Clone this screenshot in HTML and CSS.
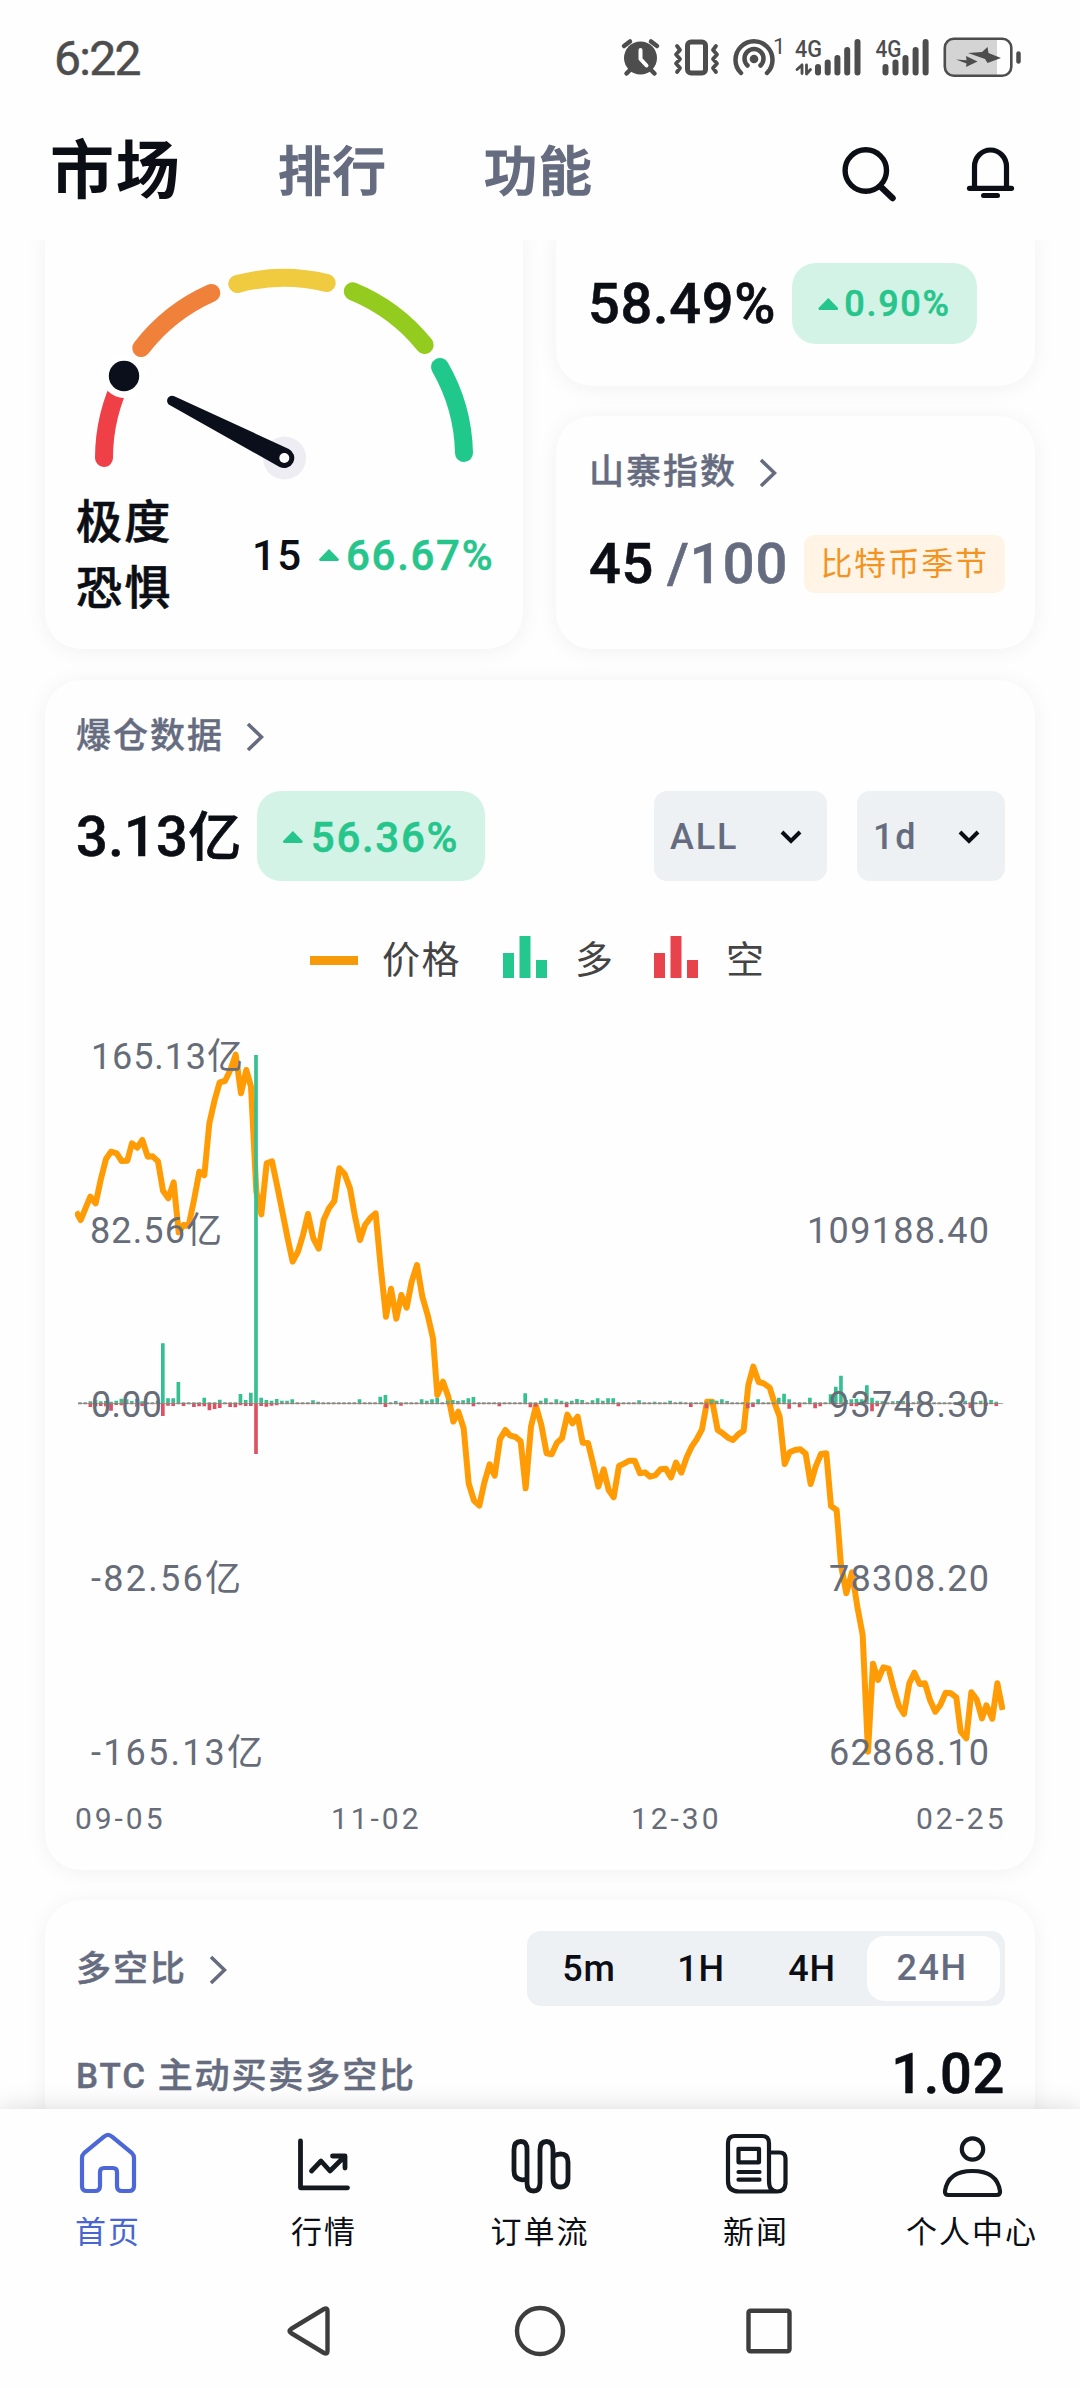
FILE: index.html
```html
<!DOCTYPE html>
<html lang="zh-CN">
<head>
<meta charset="utf-8">
<title>市场</title>
<link rel="stylesheet" href="styles.css">
</head>
<body>
<div class="screen">
  <div class="statusbar">
    <span class="clock">6:22</span>
    <svg class="status-icons" width="410" height="48" viewBox="616 34 410 48" fill="none" stroke="#4d4d4d" stroke-linecap="round" stroke-linejoin="round">
      <circle cx="640.500" cy="58" r="16.500" fill="#4d4d4d" stroke="none"/>
      <path d="M640.500 50v9l6 6.500" stroke="#fff" stroke-width="4"/>
      <path d="M624 46l6-4.500M657 46l-6-4.500M630 70l-3.500 3.500M651 70l3.500 3.500" stroke-width="4.500"/>
      <rect x="687.500" y="42" width="18" height="31" rx="3.500" stroke-width="5"/>
      <path d="M677 46l3 4-4 4.500 4 4.500-4 4.500 4 4.500-3 4M716 46l-3 4 4 4.500-4 4.500 4 4.500-4 4.500 3 4" stroke-width="3.800"/>
      <circle cx="754" cy="59" r="4.300" fill="#4d4d4d" stroke="none"/>
      <path d="M747.500 65.500a9.500 9.500 0 1 1 13 0M741 73a18.500 18.500 0 1 1 26 0" stroke-width="4.500"/>
      <g fill="#4d4d4d" stroke="none" class="status-text">
        <text x="773" y="54" font-size="22">1</text>
        <text x="795" y="56.500" font-size="24" font-weight="500" textLength="27" lengthAdjust="spacingAndGlyphs">4G</text>
        <text x="875.500" y="56.500" font-size="24" font-weight="500" textLength="26" lengthAdjust="spacingAndGlyphs">4G</text>
      </g>
      <path d="M802 65v8.500M802 65l-5 4.500M806.500 65v8.500M806.500 74l4-4.500" stroke-width="2.800"/>
      <path d="M818 67v5.500M827.700 62.500v10M837.400 58v14.500M847.200 50v22.500M857.500 42v30.500M885.500 67v5.500M895.500 62.500v10M905.500 58v14.500M915.600 50v22.500M925.600 42v30.500" stroke-width="6"/>
      <path d="M952 39h45v37h-45q-7 0-7-7V46q0-7 7-7z" fill="#d4d4d4" stroke="none"/>
      <rect x="944.800" y="38.800" width="66.500" height="37" rx="9" stroke-width="2.600"/>
      <path d="M1018.500 53.500v8" stroke-width="4.500"/>
      <path d="M956 59.500L966.500 60.300L966 56L977.500 61.500L966 67L966.500 63.500ZM968 53L982 52L987.500 47L988.500 53L1001 58L987.500 63L985 59Z" fill="#4d4d4d" stroke="none"/>
    </svg>
  </div>

  <div class="topnav">
    <span class="topnav-item active">市场</span>
    <span class="topnav-item">排行</span>
    <span class="topnav-item">功能</span>
    <svg class="topnav-icons" width="180" height="60" viewBox="840 142 180 60" fill="none" stroke="#0b0e14" stroke-linecap="round">
      <circle cx="865.800" cy="170.500" r="20.700" stroke-width="5.400"/>
      <path d="M881 187l11.500 11" stroke-width="6.500"/>
      <path d="M974.500 187v-20.500a16 16.500 0 0 1 32 0V187" stroke-width="5.200"/>
      <path d="M969.500 188.300h42" stroke-width="5.200"/>
      <path d="M983.500 195.600h14" stroke-width="5"/>
    </svg>
  </div>

  <div class="feed">
    <div class="top-cards">
      <section class="card fear">
        <svg class="gauge" width="400" height="240" viewBox="84 250 400 240" fill="none" stroke-width="18" stroke-linecap="round">
          <path d="M104 458A180 180 0 0 1 124 376" stroke="#ef4048"/>
          <path d="M141.300 348A180 180 0 0 1 211.300 293" stroke="#ef813b"/>
          <path d="M237.300 284A180 180 0 0 1 326.700 283" stroke="#f0cb40"/>
          <path d="M352.700 291.300A180 180 0 0 1 424.700 345" stroke="#93cb1e"/>
          <path d="M440 367A180 180 0 0 1 464 453" stroke="#20c98b"/>
          <circle cx="124" cy="376" r="22" fill="#fff"/>
          <circle cx="124" cy="376" r="15.200" fill="#0b0e1b"/>
          <circle cx="284.500" cy="458" r="21.500" fill="#ededf3"/>
          <path d="M174.300 396.200L288.800 449A10 10 0 0 1 279.600 466.900L170 405.300A5 5 0 0 1 174.300 396.200Z" fill="#0b0e1b"/>
          <circle cx="284.300" cy="458" r="5" fill="#fff"/>
        </svg>
        <div class="fear-row">
          <span class="fear-label">极度恐惧</span>
          <span class="fear-value">15</span>
          <i class="up"></i><span class="change">66.67%</span>
        </div>
      </section>
      <div class="side">
        <section class="card dominance">
          <span class="big">58.49%</span>
          <span class="badge small"><i class="up"></i>0.90%</span>
        </section>
        <section class="card alt">
          <h2 class="title">山寨指数<svg class="chev" width="18" height="30" viewBox="0 0 18 30"><path d="M2 2l13.500 13L2 28"/></svg></h2>
          <div class="alt-row">
            <span class="big alt-num">45</span><span class="big of">/100</span>
            <span class="tag">比特币季节</span>
          </div>
        </section>
      </div>
    </div>

    <section class="card liquidation">
      <h2 class="title">爆仓数据<svg class="chev" width="18" height="30" viewBox="0 0 18 30"><path d="M2 2l13.500 13L2 28"/></svg></h2>
      <div class="liq-row">
        <span class="big liq-num">3.13<span class="unit">亿</span></span>
        <span class="badge"><i class="up"></i>56.36%</span>
        <span class="select all">ALL<svg width="22" height="14" viewBox="0 0 22 14"><path d="M2 2l9 9 9-9"/></svg></span>
        <span class="select day">1d<svg width="22" height="14" viewBox="0 0 22 14"><path d="M2 2l9 9 9-9"/></svg></span>
      </div>
      <div class="legend">
        <i class="line-key"></i><span class="k1">价格</span>
        <svg class="b1" width="44" height="42" viewBox="0 0 44 42" fill="#24c78d"><path d="M0 17h11v25H0zM16.500 0h11v42h-11zM33 24h11v18H33z"/></svg><span class="k2">多</span>
        <svg class="b2" width="44" height="42" viewBox="0 0 44 42" fill="#e8434d"><path d="M0 17h11v25H0zM16.500 0h11v42h-11zM33 24h11v18H33z"/></svg><span>空</span>
      </div>
      <svg class="chart" width="930" height="810" viewBox="75 1030 930 810">
        <path d="M78 1403.500H1003" stroke="#666c80" stroke-width="1" stroke-opacity=".6"/>
        <g transform="translate(60 1020) scale(.33333)">
          <polyline class="price" points="48,575 62,600 91,530 107,550 122,480 138,417 153,395 170,400 185,423 202,422 216,370 232,383 247,360 263,410 278,409 294,424 309,512 325,535 341,487 356,637 371,615 386,617 402,540 418,455 433,466 448,310 464,240 479,187 495,183 511,150 527,104 543,220 559,150 573,200 589,515 604,583 620,430 636,424 652,500 667,575 683,655 698,725 714,695 729,645 744,582 760,655 776,686 791,600 807,565 823,543 838,445 854,462 870,505 885,590 900,660 915,615 931,594 947,580 962,740 978,890 993,806 1009,896 1024,825 1040,863 1055,785 1071,735 1087,830 1103,885 1119,955 1132,1125 1149,1085 1165,1130 1180,1205 1195,1175 1211,1225 1226,1390 1242,1442 1258,1457 1273,1388 1289,1333 1304,1367 1320,1258 1336,1230 1351,1247 1367,1251 1382,1264 1397,1405 1413,1220 1428,1158 1444,1215 1460,1300 1475,1303 1491,1268 1506,1255 1522,1184 1537,1210 1553,1190 1568,1268 1584,1269 1599,1330 1615,1400 1631,1348 1646,1410 1661,1432 1677,1338 1693,1330 1708,1322 1724,1322 1740,1360 1755,1357 1770,1370 1786,1366 1802,1348 1817,1346 1833,1372 1848,1328 1864,1358 1880,1312 1895,1280 1910,1258 1926,1228 1941,1145 1957,1145 1973,1230 1988,1240 2004,1253 2019,1260 2035,1243 2051,1232 2065,1095 2080,1040 2096,1086 2111,1090 2129,1103 2144,1150 2159,1190 2174,1332 2189,1297 2205,1290 2221,1288 2237,1301 2252,1392 2267,1340 2283,1302 2299,1300 2313,1458 2330,1470 2343,1635 2359,1720 2376,1657 2392,1760 2408,1845 2424,2195 2439,1931 2454,1980 2470,1942 2486,1946 2501,2005 2517,2058 2532,2082 2548,1990 2563,1958 2579,1992 2595,1990 2610,2040 2626,2075 2641,2055 2657,2018 2673,2020 2689,2032 2702,2135 2719,2155 2734,2017 2750,2038 2766,2095 2779,2056 2797,2096 2812,1990 2828,2070"/>
          <path id="longs" fill="#35c08f"/>
          <path id="shorts" fill="#dc5262"/>
        </g>
        <g class="ylabel">
          <text x="91" y="1068.500" textLength="152">165.13亿</text>
          <text x="90" y="1242.500" textLength="132">82.56亿</text>
          <text x="91" y="1416.500" textLength="71">0.00</text>
          <text x="91" y="1590.500" textLength="150">-82.56亿</text>
          <text x="91" y="1764.500" textLength="172">-165.13亿</text>
          <text x="807" y="1242.500" textLength="182">109188.40</text>
          <text x="829" y="1416.500" textLength="160">93748.30</text>
          <text x="829" y="1590.500" textLength="160">78308.20</text>
          <text x="829" y="1764.500" textLength="160">62868.10</text>
        </g>
        <g class="xlabel">
          <text x="75" y="1829" textLength="87.500">09-05</text>
          <text x="331" y="1829" textLength="87.500">11-02</text>
          <text x="631" y="1829" textLength="87.500">12-30</text>
          <text x="916" y="1829" textLength="87.500">02-25</text>
        </g>
      </svg>
    </section>

    <section class="card ratio">
      <div class="ratio-head">
        <h2 class="title">多空比<svg class="chev" width="18" height="30" viewBox="0 0 18 30"><path d="M2 2l13.500 13L2 28"/></svg></h2>
        <div class="segment"><span>5m</span><span>1H</span><span>4H</span><span class="on">24H</span></div>
      </div>
      <div class="ratio-row"><span class="pair">BTC 主动买卖多空比</span><span class="big">1.02</span></div>
    </section>
  </div>

  <nav class="tabbar">
    <div class="tab current">
      <svg width="72" height="72" viewBox="72 2127 72 72"><path d="M82 2158q0-3 2-4.800l20-16.500q4-3.700 8 0l20 16.500q2 1.800 2 4.800v28q0 5-5 5h-7q-5 0-5-5v-14q0-4-4-4h-9q-4 0-4 4v14q0 5-5 5h-8q-5 0-5-5z"/></svg>
      <span>首页</span>
    </div>
    <div class="tab">
      <svg width="72" height="72" viewBox="288 2127 72 72"><path d="M300.500 2141v46.800h47M311.500 2171l9.500-10 9 10 14-14M332.500 2156h12.500v12" stroke-width="4.800"/></svg>
      <span>行情</span>
    </div>
    <div class="tab">
      <svg width="72" height="72" viewBox="504 2127 72 72"><path d="M527 2178.500q-2.500 1.500-5 1.300q-8-.6-8-8.800v-21q0-8.500 6.700-8.500t6.300 8.500v33q0 8 6.500 8t6.500-8v-33q0-8.500 6.500-8.500t6.500 8.500v28q0 9 7.500 9t7.500-9v-16q0-8-7.500-8-3.500 0-7.500 2.500" stroke-width="4.800"/></svg>
      <span>订单流</span>
    </div>
    <div class="tab">
      <svg width="72" height="72" viewBox="720 2127 72 72"><path d="M777 2191.500h-38q-11 0-11-10.500v-38q0-7 7-7h27q7 0 7 7v38q0 10.500 8 10.500t8.500-8v-25q0-6-6-6H770M738.500 2148.800h20.500v13.500h-20.500zM738.500 2172h21M738.500 2179.700h21"/></svg>
      <span>新闻</span>
    </div>
    <div class="tab">
      <svg width="72" height="72" viewBox="937 2127 72 72"><circle cx="973.500" cy="2149" r="10.700"/><path d="M949.500 2195q-4 0-3.500-4 3-20 27.500-20t27.500 20q.5 4-3.500 4z"/></svg>
      <span>个人中心</span>
    </div>
  </nav>
  <div class="sysnav">
    <svg width="520" height="60" viewBox="280 2301 520 60" fill="none" stroke="#3d3d3d" stroke-width="4.400" stroke-linejoin="round">
      <path d="M324 2309L291 2329q-3 2 0 4L324 2353q3.500 1.500 3.500-2V2311q0-3.500-3.500-2z"/>
      <circle cx="540" cy="2331" r="23"/>
      <rect x="748.500" y="2310.800" width="41" height="40.500" rx="2"/>
    </svg>
  </div>
</div>
<script src="chart.js"></script>
</body>
</html>
```

FILE: chart.js
```js
// Daily liquidation bars: index -> height; every other day keeps the minimum height.
var COUNT = 178, STEP = 15.53, START = 60, ZERO = 1150, WIDTH = 11;
var longs = {2:6,3:11,4:6,5:7,6:5,7:8,8:14,9:12,10:7,11:14,12:6,15:8,16:180,17:15,18:15,19:64,24:17,27:11,31:28,32:10,33:32,34:1045,35:17,36:10,37:8,38:13,39:8,40:8,41:12,45:9,46:5,54:12,58:20,59:25,61:7,66:12,67:8,68:12,69:16,71:8,72:10,73:7,74:9,75:15,76:19,86:30,89:8,90:15,92:12,93:8,94:5,95:8,96:13,97:10,99:9,100:15,101:8,102:15,103:15,108:9,111:5,114:8,116:5,122:10,123:8,124:12,125:7,131:12,135:17,136:29,137:12,141:17,145:27,146:50,147:83,148:10,149:12,150:14,151:12,152:54,153:17,154:8,155:6,157:6,158:7,159:7,162:6,170:6,171:8,174:8,176:10,177:5};
var shorts = {2:11,3:9,4:8,5:9,6:22,7:5,8:6,11:10,12:8,16:38,17:7,18:8,20:8,22:11,23:9,24:9,25:21,26:17,27:14,29:11,30:12,31:6,32:8,33:8,34:152,35:8,36:10,37:7,38:6,59:11,62:7,76:9,81:9,87:12,88:10,94:12,104:9,118:11,121:15,129:15,130:11,137:16,139:12,142:15,143:9,149:8,150:9,153:24,154:9,160:10,172:14,175:7,177:8};
function bars(data, sign) {
  var d = "";
  for (var i = 0; i < COUNT; i++) {
    var h = data[i] || 3;
    d += "M" + (START + i * STEP - WIDTH / 2).toFixed(1) + " " + ZERO + "v" + (sign * h) + "h" + WIDTH + "V" + ZERO + "z";
  }
  return d;
}
document.getElementById("longs").setAttribute("d", bars(longs, -1));
document.getElementById("shorts").setAttribute("d", bars(shorts, 1));
```

FILE: styles.css
```css
* { box-sizing: border-box; }
body { margin: 0; background: #fefefe; font-family: Roboto, "Noto Sans CJK SC", sans-serif; color: #0b0e14; }
svg { display: block; flex: none; }
.screen { width: 1080px; height: 2388px; display: flex; flex-direction: column; overflow: hidden; }

.statusbar { height: 116px; display: flex; align-items: center; padding: 2px 54px 0; }
.clock { font-size: 48px; color: #4d4d4d; letter-spacing: -1.700px; line-height: 58px; -webkit-text-stroke: .5px #4d4d4d; }
.status-icons { margin: -2px 0 0 auto; }
.status-text { font-family: Roboto, sans-serif; }

.topnav { height: 124px; display: flex; align-items: center; padding: 0 0 16px 50px; line-height: 80px; }
.topnav-item { width: 206px; margin-top: 6px; font-size: 53px; letter-spacing: 1.800px; font-weight: 500; color: #666c80; -webkit-text-stroke: 1.400px #666c80; }
.topnav-item.active { width: 228px; margin-top: 3px; font-size: 64px; font-weight: 700; color: #0b0e14; -webkit-text-stroke: 0; }
.topnav-icons { margin-left: 150px; margin-top: 4px; }

.feed { height: 1869px; overflow: hidden; padding: 0 45px; }
.card { background: #fefefe; border-radius: 36px; box-shadow: 0 2px 22px rgba(0, 0, 0, .055); }
.top-cards { display: grid; grid-template-columns: 478px 479px; gap: 33px; height: 439px; margin-top: -30px; }
.side { display: grid; grid-template-rows: 176px 233px; gap: 30px; }

.fear { padding-top: 40px; }
.gauge { margin-left: 39px; }
.fear-row { display: flex; align-items: center; height: 132px; margin: -1px 0 0 31px; }
.fear-label { width: 100px; margin-right: 76px; font-size: 46px; letter-spacing: 2.200px; line-height: 66px; font-weight: 500; -webkit-text-stroke: .6px #0b0e14; }
.fear-value { width: 67px; font-size: 42px; font-weight: 500; letter-spacing: 1.500px; }
.change { margin-left: 7px; font-size: 42px; font-weight: 500; letter-spacing: 1.700px; color: #26c58c; -webkit-text-stroke: .5px #26c58c; }
.up { width: 20px; height: 12px; background: #26c58c; clip-path: polygon(50% 0, 100% 85%, 96% 100%, 4% 100%, 0 85%); }

.big { font-size: 56px; font-weight: 500; line-height: 66px; letter-spacing: .700px; -webkit-text-stroke: .6px currentColor; }
.dominance { display: flex; align-items: center; padding: 10px 0 0 32px; }
.dominance .big { width: 204px; padding-top: 2px; }
.badge { display: flex; align-items: center; justify-content: center; width: 228px; height: 90px; padding-top: 2px; gap: 8px; border-radius: 24px; background: #d2f3e6; color: #26c58c; font-size: 42px; font-weight: 500; letter-spacing: 1.700px; -webkit-text-stroke: .5px #26c58c; }
.badge.small { width: 185px; height: 81px; font-size: 36px; gap: 6px; }

.title { display: flex; align-items: center; gap: 22px; margin: 0; font-size: 35px; font-weight: 500; letter-spacing: 2px; line-height: 44px; color: #666c80; -webkit-text-stroke: .4px #666c80; }
.chev { fill: none; stroke: #666c80; stroke-width: 3.600; }
.alt { padding: 35px 0 0 33px; }
.alt-row { display: flex; align-items: center; margin-top: 40px; height: 58px; }
.alt-num { width: 78px; }
.of { width: 137px; color: #666c80; letter-spacing: 1px; }
.tag { width: 201px; height: 58px; border-radius: 10px; background: #fff4e6; color: #f39422; font-size: 32px; letter-spacing: 1.600px; line-height: 59px; text-align: center; }

.liquidation { height: 1190px; margin-top: 31px; padding: 35px 30px 0; }
.liquidation .title { margin-left: 1px; }
.liq-row { display: flex; align-items: center; height: 90px; margin-top: 32px; }
.liq-num { width: 182px; padding: 3px 0 0 1px; letter-spacing: .300px; white-space: nowrap; }
.unit { font-size: 53px; -webkit-text-stroke: .8px currentColor; }
.select { display: flex; align-items: center; justify-content: space-between; height: 90px; border-radius: 13px; background: #edf1f4; color: #666c80; font-size: 36px; font-weight: 500; letter-spacing: 1.800px; padding: 2px 25px 0 16px; }
.select svg { fill: none; stroke: #0b0e14; stroke-width: 4; }
.select.all { width: 173px; margin-left: 169px; }
.select.day { width: 148px; margin-left: 30px; }
.legend { display: flex; align-items: center; height: 60px; margin-top: 49px; padding-left: 235px; font-size: 38px; letter-spacing: 1.500px; color: #444; line-height: 60px; }
.line-key { width: 48px; height: 9px; margin-right: 24px; background: #f79a0a; }
.k1 { width: 121px; }
.b1, .b2 { margin-top: -7px; margin-right: 28px; }
.k2 { width: 79px; }
.chart { margin-top: 40px; }
.price { fill: none; stroke: #ff9c05; stroke-width: 18; stroke-linejoin: round; }
.ylabel { font-size: 36px; fill: #666c78; }
.xlabel { font-size: 30px; fill: #666c78; }

.ratio { height: 400px; margin-top: 30px; padding: 31px 30px 0 31px; }
.ratio-head { display: flex; align-items: center; justify-content: space-between; height: 75px; }
.ratio .title { padding-top: 2px; }
.segment { display: flex; align-items: center; width: 478px; height: 75px; padding: 6px 5px 6px 6px; border-radius: 14px; background: #eef1f4; font-size: 36px; font-weight: 500; letter-spacing: .800px; }
.segment span { width: 112px; line-height: 66px; text-align: center; }
.segment span:nth-child(3) { width: 110px; }
.segment .on { width: 133px; line-height: 65px; border-radius: 18px; background: #fefefe; color: #666c80; letter-spacing: 1.500px; padding-right: 3px; }
.ratio-row { display: flex; align-items: center; justify-content: space-between; margin-top: 35px; height: 66px; }
.pair { margin-top: -3px; font-size: 35px; font-weight: 500; letter-spacing: 1.900px; color: #666c80; -webkit-text-stroke: .4px #666c80; }

.tabbar { position: relative; display: flex; height: 164px; padding-top: 18px; background: #fefefe; box-shadow: 0 0 24px rgba(0, 0, 0, .15); }
.tab { flex: 1; display: flex; flex-direction: column; align-items: center; font-size: 31px; letter-spacing: 2px; line-height: 44px; }
.tab span { margin-top: 12px; }
.tab svg { fill: none; stroke: #14181f; stroke-width: 4.200; stroke-linecap: round; stroke-linejoin: round; }
.tab.current { color: #4766cf; }
.tab.current svg { stroke: #4c67d8; }
.sysnav { position: relative; display: flex; justify-content: center; padding-top: 28px; flex: 1; background: #fefefe; }
```
